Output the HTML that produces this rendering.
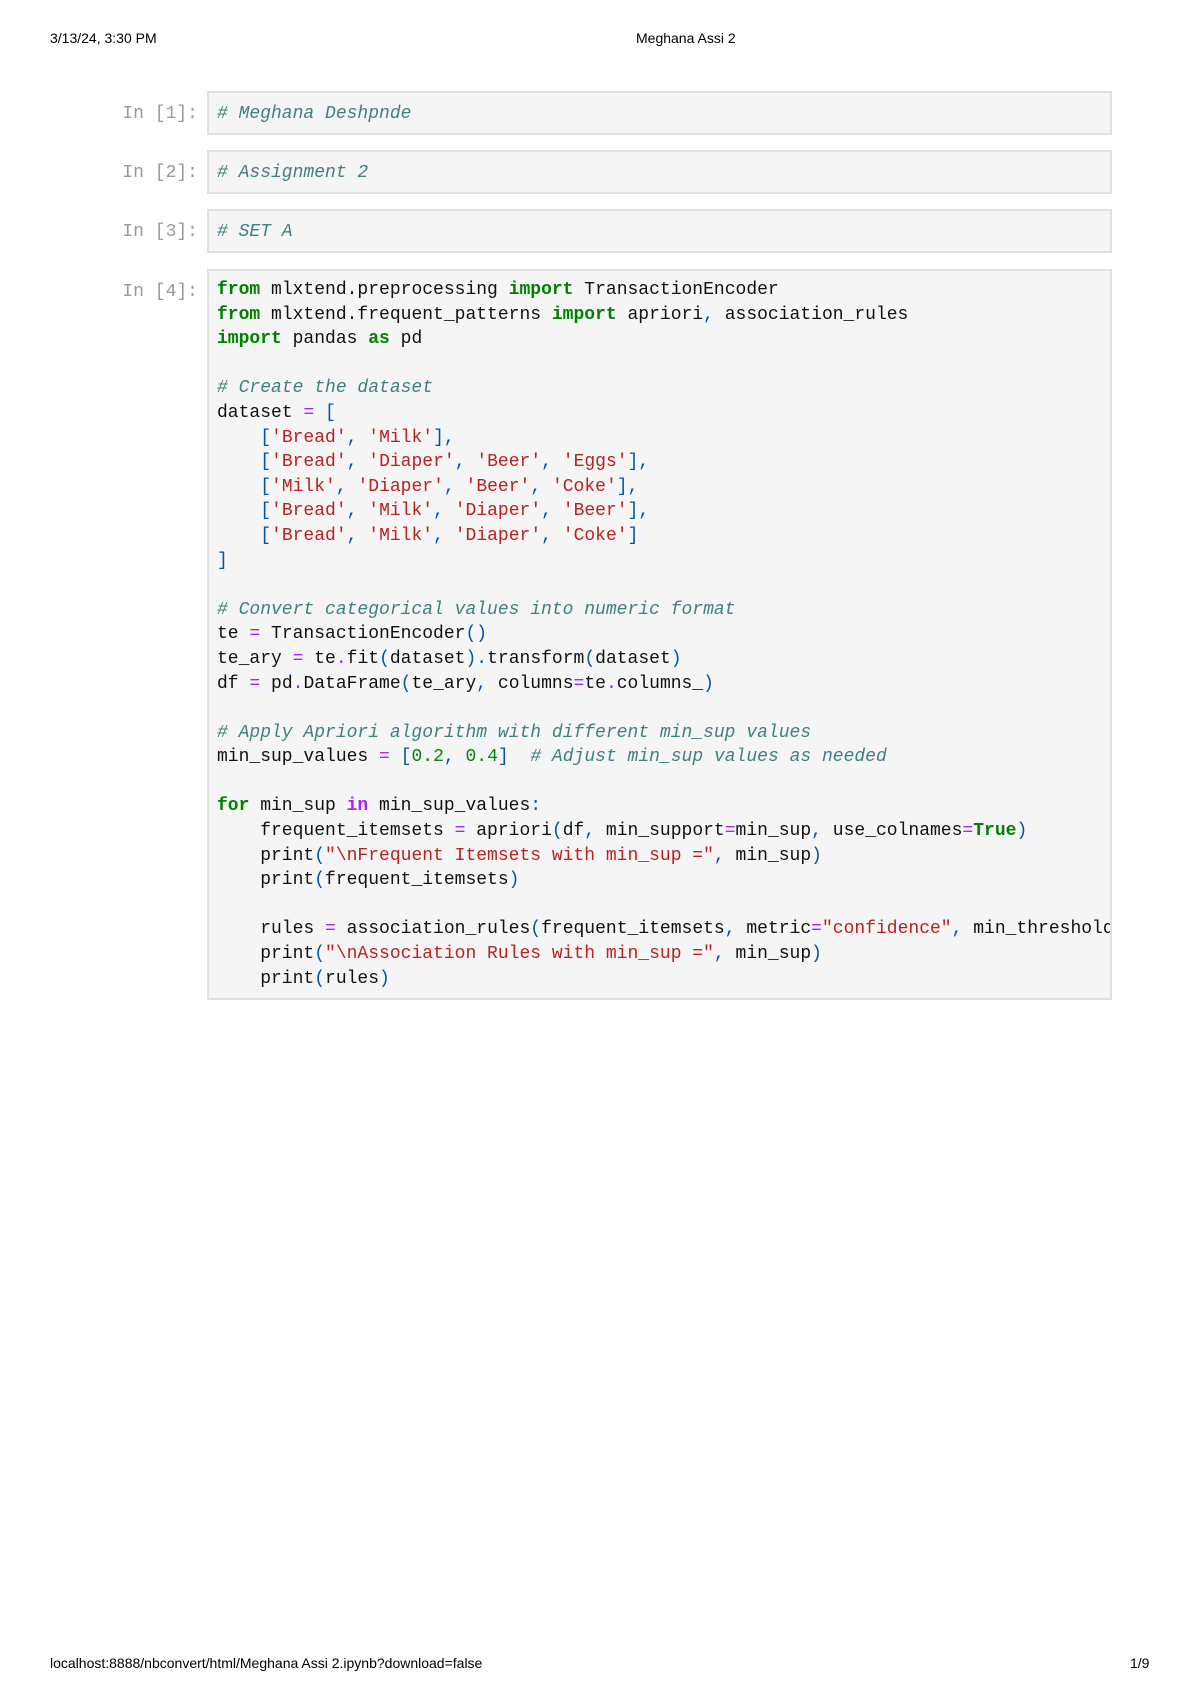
<!DOCTYPE html>
<html><head><meta charset="utf-8"><style>
body{margin:0;width:1200px;height:1698px;background:#fff;position:relative;font-family:"Liberation Sans",sans-serif;}
.hdr{position:absolute;font-size:14px;color:#000;}
.cell{position:absolute;left:207px;width:905px;background:#f5f5f5;border:2px solid #e0e0e0;box-sizing:border-box;}
.p{position:absolute;left:100px;width:98px;text-align:right;font-family:"Liberation Mono",monospace;font-size:18px;color:#999;}
pre{margin:0;position:absolute;left:8px;font-family:"Liberation Mono",monospace;font-size:18px;line-height:24.6px;color:#111;white-space:pre;overflow:hidden;width:893px;}
.k{color:#008000;font-weight:bold}.c{color:#408080;font-style:italic}.s{color:#ba2121}.o{color:#aa22ff}.b{color:#0055aa}.n{color:#008800}
</style></head><body>
<div class="hdr" style="left:50px;top:30px">3/13/24, 3:30 PM</div>
<div class="hdr" style="left:636px;top:30px">Meghana Assi 2</div>
<div class="p" style="top:104px">In [1]:</div>
<div class="cell" style="top:91px;height:44px"><pre style="top:9px"><span class="c"># Meghana Deshpnde</span></pre></div>
<div class="p" style="top:163px">In [2]:</div>
<div class="cell" style="top:150px;height:44px"><pre style="top:9px"><span class="c"># Assignment 2</span></pre></div>
<div class="p" style="top:222px">In [3]:</div>
<div class="cell" style="top:209px;height:44px"><pre style="top:9px"><span class="c"># SET A</span></pre></div>
<div class="p" style="top:282px">In [4]:</div>
<div class="cell" style="top:269px;height:731px"><pre style="top:7px"><span class="k">from</span> mlxtend.preprocessing <span class="k">import</span> TransactionEncoder
<span class="k">from</span> mlxtend.frequent_patterns <span class="k">import</span> apriori<span class="b">,</span> association_rules
<span class="k">import</span> pandas <span class="k">as</span> pd

<span class="c"># Create the dataset</span>
dataset <span class="o">=</span> <span class="b">[</span>
    <span class="b">[</span><span class="s">'Bread'</span><span class="b">,</span> <span class="s">'Milk'</span><span class="b">],</span>
    <span class="b">[</span><span class="s">'Bread'</span><span class="b">,</span> <span class="s">'Diaper'</span><span class="b">,</span> <span class="s">'Beer'</span><span class="b">,</span> <span class="s">'Eggs'</span><span class="b">],</span>
    <span class="b">[</span><span class="s">'Milk'</span><span class="b">,</span> <span class="s">'Diaper'</span><span class="b">,</span> <span class="s">'Beer'</span><span class="b">,</span> <span class="s">'Coke'</span><span class="b">],</span>
    <span class="b">[</span><span class="s">'Bread'</span><span class="b">,</span> <span class="s">'Milk'</span><span class="b">,</span> <span class="s">'Diaper'</span><span class="b">,</span> <span class="s">'Beer'</span><span class="b">],</span>
    <span class="b">[</span><span class="s">'Bread'</span><span class="b">,</span> <span class="s">'Milk'</span><span class="b">,</span> <span class="s">'Diaper'</span><span class="b">,</span> <span class="s">'Coke'</span><span class="b">]</span>
<span class="b">]</span>

<span class="c"># Convert categorical values into numeric format</span>
te <span class="o">=</span> TransactionEncoder<span class="b">()</span>
te_ary <span class="o">=</span> te<span class="o">.</span>fit<span class="b">(</span>dataset<span class="b">).</span>transform<span class="b">(</span>dataset<span class="b">)</span>
df <span class="o">=</span> pd<span class="o">.</span>DataFrame<span class="b">(</span>te_ary<span class="b">,</span> columns<span class="o">=</span>te<span class="o">.</span>columns_<span class="b">)</span>

<span class="c"># Apply Apriori algorithm with different min_sup values</span>
min_sup_values <span class="o">=</span> <span class="b">[</span><span class="n">0.2</span><span class="b">,</span> <span class="n">0.4</span><span class="b">]</span>  <span class="c"># Adjust min_sup values as needed</span>

<span class="k">for</span> min_sup <span class="o" style="font-weight:bold">in</span> min_sup_values<span class="b">:</span>
    frequent_itemsets <span class="o">=</span> apriori<span class="b">(</span>df<span class="b">,</span> min_support<span class="o">=</span>min_sup<span class="b">,</span> use_colnames<span class="o">=</span><span class="k">True</span><span class="b">)</span>
    print<span class="b">(</span><span class="s">"\nFrequent Itemsets with min_sup ="</span><span class="b">,</span> min_sup<span class="b">)</span>
    print<span class="b">(</span>frequent_itemsets<span class="b">)</span>

    rules <span class="o">=</span> association_rules<span class="b">(</span>frequent_itemsets<span class="b">,</span> metric<span class="o">=</span><span class="s">"confidence"</span><span class="b">,</span> min_threshold<span class="o">=</span><span class="n">0.5</span><span class="b">)</span>
    print<span class="b">(</span><span class="s">"\nAssociation Rules with min_sup ="</span><span class="b">,</span> min_sup<span class="b">)</span>
    print<span class="b">(</span>rules<span class="b">)</span></pre></div>
<div class="hdr" style="left:50px;top:1655px">localhost:8888/nbconvert/html/Meghana Assi 2.ipynb?download=false</div>
<div class="hdr" style="left:1130px;top:1655px">1/9</div>
</body></html>
